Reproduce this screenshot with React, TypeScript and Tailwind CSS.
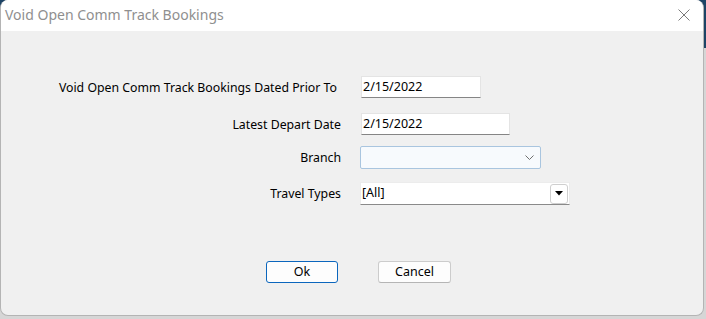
import React from "react";

const font = { fontFamily: '"Noto Sans", "Open Sans", sans-serif' };

function Row({
  label,
  labelPad,
  height,
  mt,
  children,
}: {
  label: string;
  labelPad: string;
  height: string;
  mt: string;
  children: React.ReactNode;
}) {
  return (
    <div className={`flex items-center ${height} ${mt}`}>
      <div className={`w-[340px] shrink-0 text-right text-[12.3px] text-black whitespace-nowrap pt-[2px] ${labelPad}`}>{label}</div>
      {children}
    </div>
  );
}

export default function App() {
  return (
    <div
      className="w-[706px] h-[319px] overflow-hidden bg-[linear-gradient(to_bottom,#1d4466_0px,#1d4466_48px,#d6d6d6_48px,#d6d6d6_100%)]"
      style={font}
    >
      <div className="w-[704px] h-[316px] rounded-[8px] overflow-hidden bg-[#f0f0f0] border-l border-r border-b border-[#b4b4b4] flex flex-col">
        {/* Title bar */}
        <div className="h-[31px] shrink-0 bg-white flex items-center justify-between pl-[4px] pr-[13px]">
          <span className="text-[14px] text-[#8f8f8f] leading-none pb-[1px]">Void Open Comm Track Bookings</span>
          <svg width="12" height="12" viewBox="0 0 12 12" className="mt-[-1px]">
            <path d="M0.5 0.5 L11.5 11.5 M11.5 0.5 L0.5 11.5" stroke="#7a7a7a" strokeWidth="1" fill="none" />
          </svg>
        </div>

        {/* Body */}
        <div className="flex flex-col">
          <Row label="Void Open Comm Track Bookings Dated Prior To" labelPad="pr-[4px]" height="h-[22px]" mt="mt-[45px]">
            <div className="ml-[20px] w-[120px] h-[22px] bg-white border border-[#e4e4e4] border-b-[#858585] flex items-center pl-[1px] text-[12.5px] text-black">
              2/15/2022
            </div>
          </Row>
          <Row label="Latest Depart Date" labelPad="pr-[0px]" height="h-[22px]" mt="mt-[15px]">
            <div className="ml-[20px] w-[149px] h-[22px] bg-white border border-[#e4e4e4] border-b-[#858585] flex items-center pl-[1px] text-[12.5px] text-black">
              2/15/2022
            </div>
          </Row>
          <Row label="Branch" labelPad="pr-[0px]" height="h-[23px]" mt="mt-[11px]">
            <div className="ml-[19px] w-[181px] h-[23px] bg-[#f7fafd] border border-[#a9c5df] rounded-[2px] flex items-center justify-end pr-[6px]">
              <svg width="9" height="5" viewBox="0 0 9 5">
                <path d="M0.5 0.5 L4.5 4.5 L8.5 0.5" stroke="#6f6f6f" strokeWidth="1" fill="none" />
              </svg>
            </div>
          </Row>
          <Row label="Travel Types" labelPad="pr-[0px]" height="h-[23px]" mt="mt-[13px]">
            <div className="ml-[19px] w-[210px] h-[23px] bg-white border border-[#ececec] border-b-[#8a8a8a] flex items-center justify-between pl-[1px] pr-[1px] text-[12.5px] text-black">
              <span>[All]</span>
              <div className="w-[18px] h-[20px] rounded-[3px] border border-[#cfcfcf] bg-white flex items-center justify-center">
                <svg width="8" height="5" viewBox="0 0 8 5">
                  <path d="M0 0 L8 0 L4 4.5 Z" fill="#000" />
                </svg>
              </div>
            </div>
          </Row>

          {/* Buttons */}
          <div className="flex mt-[56px] pl-[265px] gap-[40px]">
            <button className="w-[72px] h-[22px] rounded-[3px] border border-[#0b66bd] bg-[#fdfdfd] text-[12.5px] text-black flex items-center justify-center">
              Ok
            </button>
            <button className="w-[73px] h-[22px] rounded-[3px] border border-[#cccccc] border-b-[#b5b5b5] bg-[#fdfdfd] text-[12.5px] text-black flex items-center justify-center">
              Cancel
            </button>
          </div>
        </div>
      </div>
    </div>
  );
}
